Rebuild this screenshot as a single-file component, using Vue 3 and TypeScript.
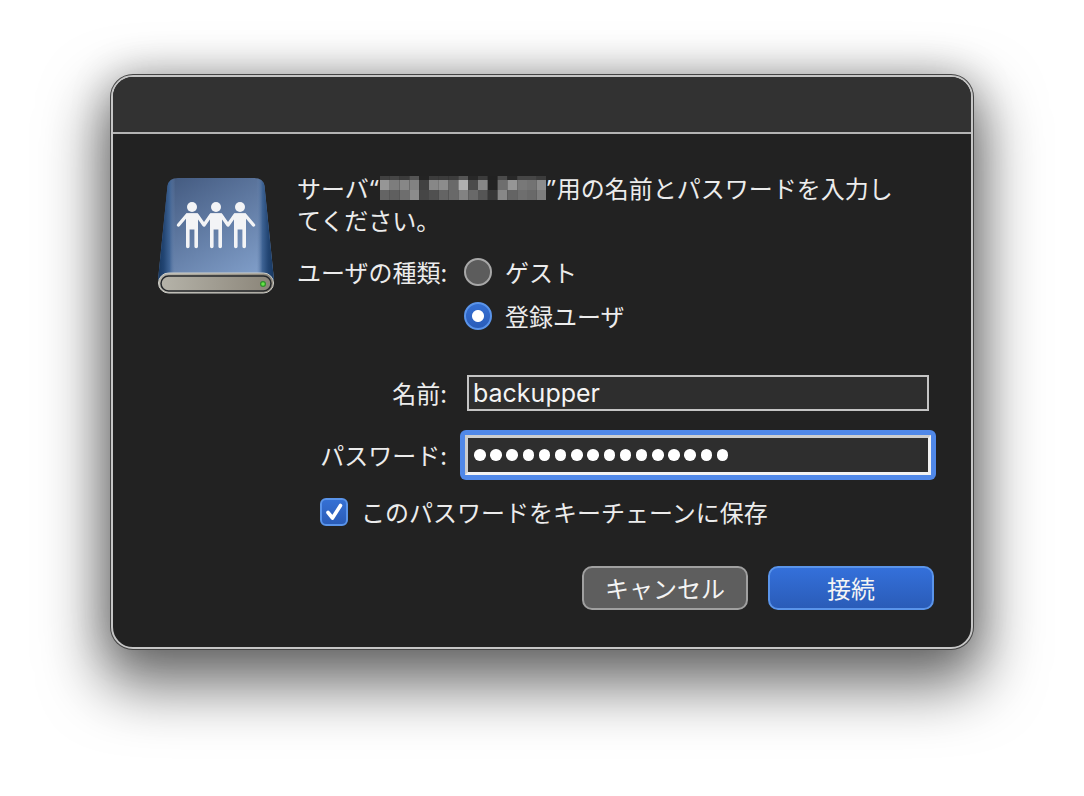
<template>
  <div class="page">
    <div class="dialog">
      <div class="titlebar"></div>
      <div class="body">
        <svg class="drive" width="118" height="118" viewBox="0 0 118 118">
          <defs>
            <linearGradient id="driveFace" x1="0.15" y1="0" x2="0.85" y2="1">
              <stop offset="0" stop-color="#455c82" />
              <stop offset="1" stop-color="#82a0cb" />
            </linearGradient>
            <linearGradient id="driveEdge" x1="0" y1="0" x2="1" y2="0">
              <stop offset="0" stop-color="#17375f" />
              <stop offset="0.05" stop-color="#224573" />
              <stop offset="0.1" stop-color="#3e6394" />
              <stop offset="0.15" stop-color="#6c87b0" stop-opacity="0" />
              <stop offset="0.85" stop-color="#6c87b0" stop-opacity="0" />
              <stop offset="0.9" stop-color="#3e6394" />
              <stop offset="0.95" stop-color="#224573" />
              <stop offset="1" stop-color="#17375f" />
            </linearGradient>
            <linearGradient id="driveSlot" x1="0" y1="0" x2="1" y2="0">
              <stop offset="0" stop-color="#b6b4aa" />
              <stop offset="1" stop-color="#8a8478" />
            </linearGradient>
          </defs>
          <path class="face" d="M20 0H96Q105 0 106.5 8L116 102H0L9.5 8Q11 0 20 0Z" fill="url(#driveFace)" />
          <path class="face" d="M20 0H96Q105 0 106.5 8L116 102H0L9.5 8Q11 0 20 0Z" fill="url(#driveEdge)" />
          <g fill="#f3f4f6">
            <circle cx="34" cy="29" r="5" />
            <circle cx="58" cy="29" r="5" />
            <circle cx="82" cy="29" r="5" />
            <path d="M28 35.5H40V51.5H28ZM52 35.5H64V51.5H52ZM76 35.5H88V51.5H76Z" />
          </g>
          <g fill="none" stroke="#f3f4f6" stroke-linecap="round" stroke-linejoin="round">
            <path d="M20.5 47L29 37H39L46 47L53 37H63L70 47L77 37H87L95.5 47" stroke-width="3.4" />
            <path d="M29.8 50V68.5M38.2 50V68.5M53.8 50V68.5M62.2 50V68.5M77.8 50V68.5M86.2 50V68.5" stroke-width="3.6" />
          </g>
          <rect x="0.5" y="95" width="115" height="20" rx="10" fill="url(#driveSlot)" stroke="#cfcfca" stroke-width="1" />
          <rect x="3" y="98" width="110" height="15" rx="7.5" fill="none" stroke="#24272b" stroke-width="1.5" />
          <circle cx="105" cy="106" r="3" fill="#2f8f2a" />
          <circle cx="105" cy="106" r="1.8" fill="#66e648" />
        </svg>

        <div class="content">
          <p class="message">
            <span class="first-line">サーバ<span class="quote">“</span><svg class="mosaic" width="166" height="24" viewBox="0 0 166 24" aria-label="blurred server name">
              <rect
                v-for="cell in mosaicCells"
                :key="cell.key"
                :x="cell.x"
                :y="cell.y"
                width="9.8"
                :height="cell.h"
                :fill="cell.fill"
              />
            </svg><span class="quote">”</span>用の名前とパスワードを入力し</span>
            <span class="second-line">てください。</span>
          </p>

          <div class="user-kind">
            <span class="kind-label">ユーザの種類:</span>
            <div class="radios">
              <label class="radio-row">
                <span class="radio"></span>
                <span>ゲスト</span>
              </label>
              <label class="radio-row">
                <span class="radio checked"></span>
                <span>登録ユーザ</span>
              </label>
            </div>
          </div>

          <div class="field name-field">
            <span class="field-label">名前:</span>
            <div class="input">backupper</div>
          </div>

          <div class="field password-field">
            <span class="field-label">パスワード:</span>
            <div class="focus-ring">
              <div class="input password">
                <span v-for="n in 16" :key="n" class="dot"></span>
              </div>
            </div>
          </div>

          <label class="keychain">
            <span class="checkbox">
              <svg width="24" height="24" viewBox="0 0 24 24">
                <path d="M6 12.5L10.5 18L18.5 5.5" fill="none" stroke="#fff" stroke-width="3.6" stroke-linecap="round" stroke-linejoin="round" />
              </svg>
            </span>
            <span>このパスワードをキーチェーンに保存</span>
          </label>

          <div class="actions">
            <button type="button" class="btn cancel">キャンセル</button>
            <button type="button" class="btn connect">接続</button>
          </div>
        </div>
      </div>
    </div>
  </div>
</template>

<script setup lang="ts">
// grey levels of the pixelated server name, one list per row
const mosaicRows: { y: number; h: number; levels: number[] }[] = [
  { y: 0, h: 4, levels: [65, 70, 60, 85, 35, 60, 60, 60, 85, 40, 60, 33, 75, 40, 70, 70, 60] },
  { y: 4, h: 10, levels: [150, 125, 135, 130, 65, 135, 140, 105, 175, 75, 135, 35, 110, 150, 120, 115, 140] },
  { y: 14, h: 10, levels: [100, 95, 110, 140, 70, 80, 100, 105, 130, 105, 85, 55, 135, 100, 110, 105, 125] },
]

const mosaicCells = mosaicRows.flatMap((row, r) =>
  row.levels.map((g, i) => ({
    key: `${r}-${i}`,
    x: i * 9.8,
    y: row.y,
    h: row.h,
    fill: `rgb(${g},${g},${g})`,
  })),
)
</script>

<style scoped>
.page {
  width: 1084px;
  height: 796px;
  padding: 75px 0 0 111px;
  box-sizing: border-box;
  background: #fff;
  font-family: "Noto Sans CJK JP", "Noto Sans", sans-serif;
  color: #ececec;
  overflow: hidden;
}

.dialog {
  width: 862px;
  height: 574px;
  box-sizing: border-box;
  border-radius: 22px;
  border: 2px solid #c6c6c6;
  background: #222;
  box-shadow: 0 0 0 1px #444, 0 28px 60px 10px rgba(0, 0, 0, 0.55), 0 0 40px rgba(0, 0, 0, 0.22);
  overflow: hidden;
}

.titlebar {
  height: 55px;
  background: #323232;
  border-bottom: 2px solid #b4b4b4;
}

.body {
  display: flex;
  padding: 44px 0 0 45px;
}

.drive {
  flex: none;
  margin-right: 21px;
}

.content {
  width: 640px;
  font-size: 24px;
  line-height: 32px;
}

.message {
  margin: -6px 0 0;
}

.first-line {
  display: flex;
  align-items: center;
  white-space: nowrap;
}

.second-line {
  display: block;
  white-space: nowrap;
}

.quote {
  flex: none;
  width: 11px;
  font-family: "Noto Sans", sans-serif;
  text-align: center;
}

.mosaic {
  flex: none;
}

.user-kind {
  display: flex;
  margin-top: 20px;
}

.kind-label {
  width: 167px;
  flex: none;
  white-space: nowrap;
}

.radio-row {
  display: flex;
  align-items: center;
  gap: 13px;
  height: 32px;
  margin-bottom: 12px;
  white-space: nowrap;
}

.radio {
  width: 28px;
  height: 28px;
  flex: none;
  box-sizing: border-box;
  border-radius: 50%;
  border: 2px solid #a8a8a8;
  background: #5c5c5c;
}

.radio.checked {
  border-color: #5a94ea;
  background: radial-gradient(circle, #fff 0 5.5px, transparent 6.5px), linear-gradient(#3570d4, #2a5cb8);
}

.field {
  display: flex;
  align-items: center;
}

.field-label {
  width: 150px;
  flex: none;
  text-align: right;
  white-space: nowrap;
}

.name-field {
  margin-top: 31px;
}

.input {
  width: 462px;
  height: 36px;
  box-sizing: border-box;
  border: 2px solid #c4c4c4;
  background: #2e2e2e;
  color: #f4f4f4;
  font-family: Inter, "Noto Sans", sans-serif;
  font-size: 25px;
  line-height: 32px;
  padding-left: 4px;
}

.name-field .input {
  margin-left: 20px;
}

.password-field {
  margin-top: 19px;
}

.focus-ring {
  margin-left: 13px;
  padding: 5px;
  border-radius: 6px;
  background: #5088e8;
}

.password {
  display: flex;
  align-items: center;
  gap: 4.7px;
  width: 466px;
  height: 40px;
  padding-left: 6px;
  border-width: 3px;
  border-color: #cdcdcd #f2f2f2 #f2f2f2 #cdcdcd;
}

.dot {
  width: 11.5px;
  height: 11.5px;
  border-radius: 50%;
  background: #fff;
}

.keychain {
  display: flex;
  align-items: center;
  gap: 13px;
  margin: 16px 0 0 23px;
  white-space: nowrap;
}

.checkbox {
  width: 28px;
  height: 28px;
  box-sizing: border-box;
  border-radius: 6px;
  border: 2px solid #5a94ea;
  background: linear-gradient(#3570d4, #2a5cb8);
  display: flex;
  align-items: center;
  justify-content: center;
}

.actions {
  display: flex;
  justify-content: flex-end;
  gap: 20px;
  width: 637px;
  margin-top: 38px;
}

.btn {
  width: 166px;
  height: 44px;
  box-sizing: border-box;
  border-radius: 10px;
  color: #f4f4f4;
  font: inherit;
  padding: 0;
}

.cancel {
  border: 2px solid #a0a0a0;
  background: #5e5e5e;
}

.connect {
  border: 2px solid #5a94ea;
  background: linear-gradient(#3470da, #2a5cb8);
}
</style>
